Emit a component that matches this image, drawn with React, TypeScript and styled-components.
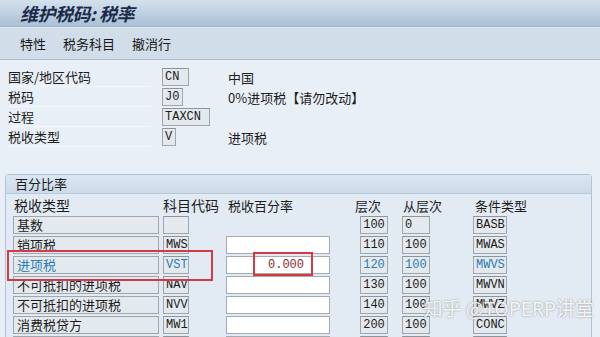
import * as React from 'react';
import styled, { createGlobalStyle } from 'styled-components';

const GlobalStyle = createGlobalStyle`
    html, body {
        margin: 0;
        padding: 0;
        background: #e9eff7;
        font-family: "Noto Sans CJK SC", "Noto Sans", sans-serif;
        color: #1c1c1c;
    }
`;

type Field = { label: string; value: string; width: number; desc?: string };

const fields: Field[] = [
    { label: '国家/地区代码', value: 'CN', width: 27, desc: '中国' },
    { label: '税码', value: 'J0', width: 21, desc: '0%进项税【请勿改动】' },
    { label: '过程', value: 'TAXCN', width: 48 },
    { label: '税收类型', value: 'V', width: 14, desc: '进项税' },
];

type Row = { name: string; code: string; pct?: string; level: string; from: string; cond: string; active?: boolean };

const rows: Row[] = [
    { name: '基数', code: '', level: '100', from: '0', cond: 'BASB' },
    { name: '销项税', code: 'MWS', pct: '', level: '110', from: '100', cond: 'MWAS' },
    { name: '进项税', code: 'VST', pct: '0.000', level: '120', from: '100', cond: 'MWVS', active: true },
    { name: '不可抵扣的进项税', code: 'NAV', pct: '', level: '130', from: '100', cond: 'MWVN' },
    { name: '不可抵扣的进项税', code: 'NVV', pct: '', level: '140', from: '100', cond: 'MWVZ' },
    { name: '消费税贷方', code: 'MW1', pct: '', level: '200', from: '100', cond: 'CONC' },
    { name: '消费税借方', code: 'MW2', pct: '', level: '210', from: '100', cond: 'COND' },
];

const App = () => {
    return (
        <Screen>
            <GlobalStyle />
            <TitleBar>维护税码: 税率</TitleBar>
            <MenuBar>
                <span>特性</span>
                <span>税务科目</span>
                <span>撤消行</span>
            </MenuBar>
            <Fields>
                {fields.map((f) => (
                    <FieldRow key={f.label}>
                        <FieldLabel>{f.label}</FieldLabel>
                        <div>
                            <CodeBox $w={f.width}>{f.value}</CodeBox>
                        </div>
                        <Desc>{f.desc}</Desc>
                    </FieldRow>
                ))}
            </Fields>
            <Group>
                <GroupHead>百分比率</GroupHead>
                <Table>
                    <HeadRow>
                        <ColHead $dx={1} $size={14}>税收类型</ColHead>
                        <ColHead $dx={0} $size={14}>科目代码</ColHead>
                        <ColHead $dx={2}>税收百分率</ColHead>
                        <ColHead $dx={-5}>层次</ColHead>
                        <ColHead $dx={1}>从层次</ColHead>
                        <ColHead $dx={2}>条件类型</ColHead>
                    </HeadRow>
                    {rows.map((r, i) => (
                        <DataRow key={i}>
                            <NameBox $active={r.active}>{r.name}</NameBox>
                            <div><CodeBox $w={26} $active={r.active}>{r.code}</CodeBox></div>
                            <div>{r.pct !== undefined && <PctInput>{r.pct}</PctInput>}</div>
                            <div><CodeBox $w={28} $active={r.active} $center>{r.level}</CodeBox></div>
                            <div><CodeBox $w={28} $active={r.active}>{r.from}</CodeBox></div>
                            <div><CodeBox $w={34} $active={r.active}>{r.cond}</CodeBox></div>
                        </DataRow>
                    ))}
                    <Mark $l={1} $t={56} $w={206} $h={31} />
                    <Mark $l={247} $t={58} $w={60} $h={24} />
                </Table>
            </Group>
            <Watermark>知乎 @TOPERP讲堂</Watermark>
        </Screen>
    );
};

const Screen = styled.div`
    position: relative;
    width: 600px;
    height: 337px;
    overflow: hidden;
    background: #e9eff7;
`;

const TitleBar = styled.div`
    height: 27px;
    box-sizing: border-box;
    padding-left: 20px;
    display: flex;
    align-items: center;
    background: linear-gradient(#d4e1ed, #aac0d6);
    border-bottom: 1px solid #9fb3c8;
    color: #1d2b4a;
    font-size: 18px;
    font-weight: bold;
    font-style: italic;
    letter-spacing: -0.5px;
`;

const MenuBar = styled.div`
    height: 33px;
    box-sizing: border-box;
    padding-left: 20px;
    display: flex;
    align-items: center;
    gap: 17px;
    background: #d1dde8;
    border-top: 1px solid #e4ecf3;
    border-bottom: 1px solid #a8b6c5;
    font-size: 13px;
    color: #1a1a1a;
`;

const Fields = styled.div`
    padding: 7px 0 0 8px;
    height: 103px;
    box-sizing: border-box;
`;

const FieldRow = styled.div`
    display: grid;
    grid-template-columns: 154px 66px auto;
    height: 20px;
    align-items: center;
`;

const FieldLabel = styled.div`
    width: 142px;
    font-size: 13px;
    line-height: 18px;
    border-bottom: 1px solid #f5f8fb;
`;

const Desc = styled.div`
    font-size: 13px;
`;

const CodeBox = styled.div<{ $w: number; $active?: boolean; $center?: boolean }>`
    width: ${(p) => p.$w}px;
    height: 18px;
    box-sizing: border-box;
    padding: 0 2px;
    border: 1px solid #9ea6ae;
    border-top-color: #8c949c;
    background: #e4e9ee;
    font-family: "Liberation Mono", monospace;
    font-size: 12px;
    line-height: 16px;
    text-align: ${(p) => (p.$center ? 'center' : 'left')};
    white-space: nowrap;
    color: ${(p) => (p.$active ? '#2b7db3' : '#1c1c1c')};
`;

const Group = styled.div`
    margin: 11px 0 0 5px;
    width: 587px;
    height: 170px;
    box-sizing: border-box;
    border: 1px solid #b1c3d6;
    border-radius: 3px 3px 0 0;
    background: #e2eaf3;
`;

const GroupHead = styled.div`
    height: 18px;
    padding-left: 9px;
    background: linear-gradient(#dbe6f1, #ccdbea);
    border-bottom: 1px solid #b7c8da;
    font-size: 13px;
    line-height: 18px;
`;

const Table = styled.div`
    position: relative;
    padding-left: 7px;
`;

const cols = '150px 63px 134px 42px 71px 40px';

const HeadRow = styled.div`
    display: grid;
    grid-template-columns: ${cols};
    height: 22px;
    align-items: center;
`;

const ColHead = styled.div<{ $dx: number; $size?: number }>`
    margin-left: ${(p) => p.$dx}px;
    font-size: ${(p) => p.$size ?? 13}px;
    white-space: nowrap;
`;

const DataRow = styled.div`
    display: grid;
    grid-template-columns: ${cols};
    height: 20px;
    align-items: start;
`;

const NameBox = styled.div<{ $active?: boolean }>`
    width: 146px;
    height: 18px;
    box-sizing: border-box;
    padding-left: 3px;
    border: 1px solid #9ea6ae;
    background: #e4e9ee;
    font-size: 13px;
    line-height: 16px;
    color: ${(p) => (p.$active ? '#2b7db3' : '#1c1c1c')};
`;

const PctInput = styled.div`
    width: 104px;
    height: 18px;
    box-sizing: border-box;
    border: 1px solid #a3abb3;
    background: #ffffff;
    padding-left: 16px;
    text-align: center;
    font-family: "Liberation Mono", monospace;
    font-size: 12px;
    line-height: 16px;
    color: #8a2a2a;
`;

const Mark = styled.div<{ $l: number; $t: number; $w: number; $h: number }>`
    position: absolute;
    left: ${(p) => p.$l}px;
    top: ${(p) => p.$t}px;
    width: ${(p) => p.$w}px;
    height: ${(p) => p.$h}px;
    box-sizing: border-box;
    border: 2px solid #d23a46;
    pointer-events: none;
`;

const Watermark = styled.div`
    position: absolute;
    right: 6px;
    bottom: 16px;
    font-size: 19px;
    color: rgba(255, 255, 255, 0.9);
    text-shadow: 0 0 2px rgba(80, 80, 80, 0.6);
    white-space: nowrap;
`;

export default App;
